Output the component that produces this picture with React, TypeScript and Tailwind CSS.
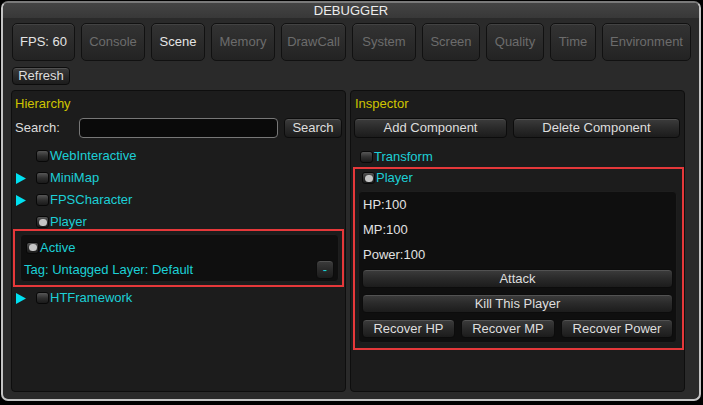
import React from 'react';

const font = { fontFamily: '"Liberation Sans", Arial, sans-serif' };

const btn =
    'flex items-center justify-center rounded-[4px] border border-[#0c0c0c] bg-gradient-to-b from-[#3c3c3c] via-[#2a2a2a] to-[#1c1c1c] text-[13px] text-[#dedede] shadow-[inset_0_1px_0_rgba(255,255,255,0.12)]';

function Check({ on = false }: { on?: boolean }) {
    return (
        <span className="flex h-[12px] w-[13px] shrink-0 items-center justify-center rounded-[3px] border border-[#080808] bg-gradient-to-b from-[#575757] via-[#303030] to-[#1a1a1a]">
            {on && <span className="h-[7px] w-[8px] rounded-full bg-[#c4c4c4]" />}
        </span>
    );
}

function Tri() {
    return (
        <svg width="10" height="11" viewBox="0 0 10 11">
            <polygon points="0,0 10,5.5 0,11" fill="#00e0f0" />
        </svg>
    );
}

function TreeRow({ label, arrow = false, on = false }: { label: string; arrow?: boolean; on?: boolean }) {
    return (
        <div className="flex h-[22px] items-center pl-[4px]">
            <span className="flex w-[20px] items-center">{arrow && <Tri />}</span>
            <Check on={on} />
            <span className="ml-[1px] text-[13px] text-[#1ccfd6]">{label}</span>
        </div>
    );
}

const tabs = [
    { name: 'FPS: 60', w: 63, on: true },
    { name: 'Console', w: 64 },
    { name: 'Scene', w: 54, on: true },
    { name: 'Memory', w: 64 },
    { name: 'DrawCall', w: 65 },
    { name: 'System', w: 64 },
    { name: 'Screen', w: 58 },
    { name: 'Quality', w: 58 },
    { name: 'Time', w: 46 },
    { name: 'Environment', w: 89 },
];

export default function App() {
    return (
        <div className="h-[405px] w-[703px] overflow-hidden bg-black pl-[1px] pt-[1px]" style={font}>
            <div className="flex h-[400px] w-[700px] flex-col overflow-hidden rounded-[7px] border-2 border-[#c4c4c4] border-t-[#7a7a7a] bg-[#2a2a2a]">
                <div className="flex h-[15px] shrink-0 items-center justify-center bg-gradient-to-b from-[#444] to-[#383838] text-[13px] leading-none text-[#ececec]">
                    DEBUGGER
                </div>

                <div className="flex flex-col pl-[8px] pt-[5px]">
                    <div className="ml-[1px] flex gap-[6px]">
                        {tabs.map(t => (
                            <div
                                key={t.name}
                                style={{ width: t.w }}
                                className={`flex h-[38px] items-center justify-center rounded-[5px] border border-[#111] bg-gradient-to-b from-[#333] to-[#232323] text-[13px] shadow-[inset_0_1px_0_rgba(255,255,255,0.08)] ${t.on ? 'text-[#e4e4e4]' : 'text-[#6c6c6c]'}`}
                            >
                                {t.name}
                            </div>
                        ))}
                    </div>

                    <div className={`${btn} ml-[1px] mt-[6px] h-[18px] w-[58px]`}>Refresh</div>

                    <div className="mt-[5px] flex gap-[4px]">
                        {/* Hierarchy */}
                        <div className="flex h-[302px] w-[335px] flex-col rounded-[4px] border border-[#0e0e0e] bg-[#1c1c1c]">
                            <div className="ml-[3px] mt-[4px] h-[18px] text-[13px] leading-[18px] text-[#cfc400]">Hierarchy</div>
                            <div className="mt-[5px] flex h-[20px] items-center pl-[3px]">
                                <span className="w-[64px] text-[13px] text-[#dcdcdc]">Search:</span>
                                <div className="h-[20px] w-[199px] rounded-[4px] border border-[#777] bg-[#0a0a0a]" />
                                <div className={`${btn} ml-[6px] h-[20px] w-[58px]`}>Search</div>
                            </div>

                            <div className="mt-[7px] flex flex-col">
                                <TreeRow label="WebInteractive" />
                                <TreeRow label="MiniMap" arrow />
                                <TreeRow label="FPSCharacter" arrow />
                                <TreeRow label="Player" on />
                            </div>

                            <div className="-mt-[4px] ml-[1px] h-[58px] w-[331px] border-2 border-[#e5383a] pb-[3px] pl-[5px] pr-[3px] pt-[3px]">
                                <div className="flex h-full flex-col rounded-[4px] border border-[#1e1e1e] bg-[#0f0f0f] pl-[5px] pr-[4px]">
                                    <div className="mt-[3px] flex items-center">
                                        <Check on />
                                        <span className="ml-[1px] text-[13px] text-[#1ccfd6]">Active</span>
                                    </div>
                                    <div className="mt-[2px] flex items-center justify-between">
                                        <span className="-ml-[2px] text-[13px] text-[#1ccfd6]">Tag: Untagged Layer: Default</span>
                                        <div className={`${btn} h-[19px] w-[18px] !text-[#1ccfd6]`}>-</div>
                                    </div>
                                </div>
                            </div>

                            <TreeRow label="HTFramework" arrow />
                        </div>

                        {/* Inspector */}
                        <div className="flex h-[302px] w-[335px] flex-col rounded-[4px] border border-[#0e0e0e] bg-[#1c1c1c]">
                            <div className="ml-[4px] mt-[4px] h-[18px] text-[13px] leading-[18px] text-[#cfc400]">Inspector</div>
                            <div className="mt-[5px] flex gap-[6px] pl-[3px]">
                                <div className={`${btn} h-[20px] w-[153px]`}>Add Component</div>
                                <div className={`${btn} h-[20px] w-[167px]`}>Delete Component</div>
                            </div>

                            <div className="mt-[8px] flex h-[21px] items-center pl-[9px]">
                                <Check />
                                <span className="ml-[1px] text-[13px] text-[#1ccfd6]">Transform</span>
                            </div>

                            <div className="ml-[2px] flex h-[183px] w-[331px] flex-col border-2 border-[#e5383a] pb-[5px] pl-[3px] pr-[5px]">
                                <div className="flex h-[18px] items-center pl-[4px]">
                                    <Check on />
                                    <span className="ml-[1px] text-[13px] text-[#1ccfd6]">Player</span>
                                </div>
                                <div className="mt-[4px] flex flex-1 flex-col rounded-[4px] border border-[#1e1e1e] bg-[#0f0f0f] px-[3px]">
                                    <div className="flex h-[25px] items-center pl-[1px] text-[13px] text-[#e2e2e2]">HP:100</div>
                                    <div className="flex h-[25px] items-center pl-[1px] text-[13px] text-[#e2e2e2]">MP:100</div>
                                    <div className="flex h-[25px] items-center pl-[1px] text-[13px] text-[#e2e2e2]">Power:100</div>
                                    <div className={`${btn} mt-[2px] h-[19px]`}>Attack</div>
                                    <div className={`${btn} mt-[6px] h-[19px]`}>Kill This Player</div>
                                    <div className="mt-[6px] flex gap-[6px]">
                                        <div className={`${btn} h-[19px] w-[93px]`}>Recover HP</div>
                                        <div className={`${btn} h-[19px] w-[94px]`}>Recover MP</div>
                                        <div className={`${btn} h-[19px] flex-1`}>Recover Power</div>
                                    </div>
                                </div>
                            </div>
                        </div>
                    </div>
                </div>
            </div>
        </div>
    );
}
